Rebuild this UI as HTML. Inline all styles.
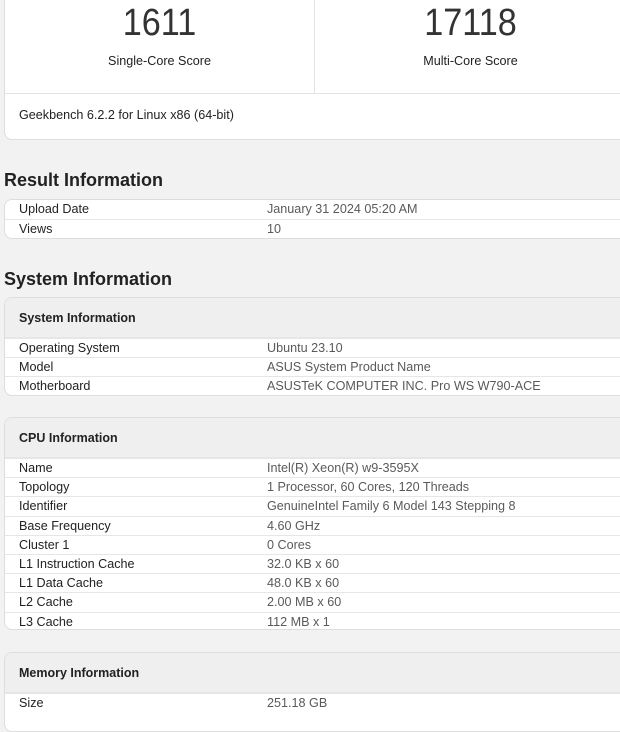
<!DOCTYPE html>
<html><head><meta charset="utf-8"><style>
*{margin:0;padding:0;box-sizing:border-box}
body{width:620px;height:708px;overflow:hidden;background:#f2f2f2;font-family:"Liberation Sans",Arial,sans-serif;color:#222;position:relative}
.card{position:absolute;left:4px;width:630px;background:#fff;border:1px solid #ddd;border-radius:8px;overflow:hidden}
.h2{position:absolute;left:4px;font-size:18px;font-weight:bold;color:#222}
.row{height:19.2px;line-height:18px;font-size:12.6px;border-top:1px solid #e6e6e6;position:relative}
.row:first-child{border-top:none}
.row .k{position:absolute;left:14px}
.row .v{position:absolute;left:262px;color:#5a5a5a}
.hd{height:40px;background:#efefef;font-size:12.5px;font-weight:bold;padding-left:14px;line-height:40px;border-bottom:1px solid #e6e6e6}
.num{position:absolute;top:11px;text-align:center;font-size:38px;color:#333;transform:scaleX(0.9)}
</style></head><body>
<div class="card" style="top:-10px;height:150px">
 <div style="position:absolute;left:309px;top:0;height:102px;border-left:1px solid #e3e3e3"></div>
 <div style="position:absolute;left:0;top:102px;width:100%;border-top:1px solid #e3e3e3"></div>
 <div class="num" style="left:0;width:309px">1611</div>
 <div style="position:absolute;left:0;width:309px;top:63px;text-align:center;font-size:12.6px">Single-Core Score</div>
 <div class="num" style="left:310px;width:311px">17118</div>
 <div style="position:absolute;left:310px;width:311px;top:63px;text-align:center;font-size:12.6px">Multi-Core Score</div>
 <div style="position:absolute;left:14px;top:117px;font-size:12.6px">Geekbench 6.2.2 for Linux x86 (64-bit)</div>
</div>
<div class="h2" style="top:170px">Result Information</div>
<div class="card" style="top:199px;height:40px">
 <div class="row"><span class="k">Upload Date</span><span class="v">January 31 2024 05:20 AM</span></div>
 <div class="row"><span class="k">Views</span><span class="v">10</span></div>
</div>
<div class="h2" style="top:269px">System Information</div>
<div class="card" style="top:297px;height:99px">
 <div class="hd">System Information</div>
 <div class="row"><span class="k">Operating System</span><span class="v">Ubuntu 23.10</span></div>
 <div class="row"><span class="k">Model</span><span class="v">ASUS System Product Name</span></div>
 <div class="row"><span class="k">Motherboard</span><span class="v">ASUSTeK COMPUTER INC. Pro WS W790-ACE</span></div>
</div>
<div class="card" style="top:417px;height:213px">
 <div class="hd">CPU Information</div>
 <div class="row"><span class="k">Name</span><span class="v">Intel(R) Xeon(R) w9-3595X</span></div>
 <div class="row"><span class="k">Topology</span><span class="v">1 Processor, 60 Cores, 120 Threads</span></div>
 <div class="row"><span class="k">Identifier</span><span class="v">GenuineIntel Family 6 Model 143 Stepping 8</span></div>
 <div class="row"><span class="k">Base Frequency</span><span class="v">4.60 GHz</span></div>
 <div class="row"><span class="k">Cluster 1</span><span class="v">0 Cores</span></div>
 <div class="row"><span class="k">L1 Instruction Cache</span><span class="v">32.0 KB x 60</span></div>
 <div class="row"><span class="k">L1 Data Cache</span><span class="v">48.0 KB x 60</span></div>
 <div class="row"><span class="k">L2 Cache</span><span class="v">2.00 MB x 60</span></div>
 <div class="row"><span class="k">L3 Cache</span><span class="v">112 MB x 1</span></div>
</div>
<div class="card" style="top:652px;height:80px">
 <div class="hd">Memory Information</div>
 <div class="row"><span class="k">Size</span><span class="v">251.18 GB</span></div>
</div>
</body></html>
